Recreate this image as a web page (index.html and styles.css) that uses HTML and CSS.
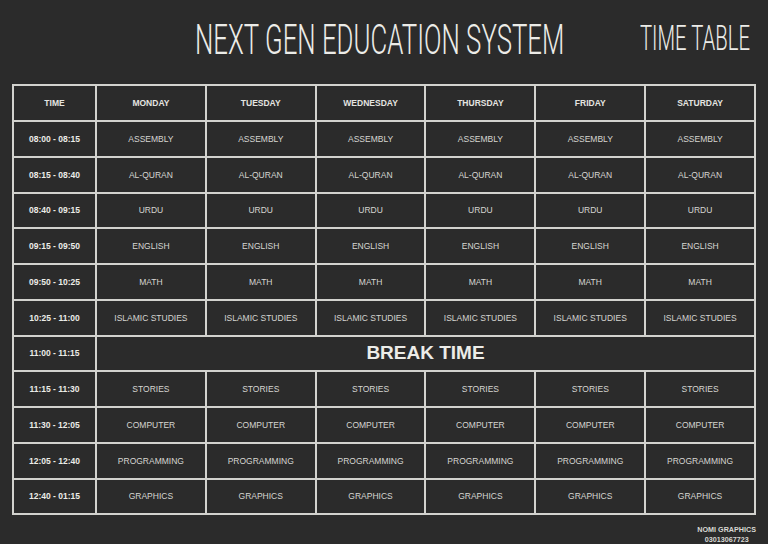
FILE: index.html
```html
<!DOCTYPE html>
<html>
<head>
<meta charset="utf-8">
<link rel="stylesheet" href="styles.css">
</head>
<body>
<header class="top">
  <div class="title-box"><h1 class="title">NEXT GEN EDUCATION SYSTEM</h1></div>
  <div class="sub-box"><h2 class="subtitle">TIME TABLE</h2></div>
</header>
<table class="tt">
  <colgroup>
    <col class="c-time"><col><col><col><col><col><col>
  </colgroup>
  <thead>
    <tr><th>TIME</th><th>MONDAY</th><th>TUESDAY</th><th>WEDNESDAY</th><th>THURSDAY</th><th>FRIDAY</th><th>SATURDAY</th></tr>
  </thead>
  <tbody>
    <tr><th>08:00 - 08:15</th><td>ASSEMBLY</td><td>ASSEMBLY</td><td>ASSEMBLY</td><td>ASSEMBLY</td><td>ASSEMBLY</td><td>ASSEMBLY</td></tr>
    <tr><th>08:15 - 08:40</th><td>AL-QURAN</td><td>AL-QURAN</td><td>AL-QURAN</td><td>AL-QURAN</td><td>AL-QURAN</td><td>AL-QURAN</td></tr>
    <tr><th>08:40 - 09:15</th><td>URDU</td><td>URDU</td><td>URDU</td><td>URDU</td><td>URDU</td><td>URDU</td></tr>
    <tr><th>09:15 - 09:50</th><td>ENGLISH</td><td>ENGLISH</td><td>ENGLISH</td><td>ENGLISH</td><td>ENGLISH</td><td>ENGLISH</td></tr>
    <tr><th>09:50 - 10:25</th><td>MATH</td><td>MATH</td><td>MATH</td><td>MATH</td><td>MATH</td><td>MATH</td></tr>
    <tr><th>10:25 - 11:00</th><td>ISLAMIC STUDIES</td><td>ISLAMIC STUDIES</td><td>ISLAMIC STUDIES</td><td>ISLAMIC STUDIES</td><td>ISLAMIC STUDIES</td><td>ISLAMIC STUDIES</td></tr>
    <tr><th>11:00 - 11:15</th><td colspan="6" class="break">BREAK TIME</td></tr>
    <tr><th>11:15 - 11:30</th><td>STORIES</td><td>STORIES</td><td>STORIES</td><td>STORIES</td><td>STORIES</td><td>STORIES</td></tr>
    <tr><th>11:30 - 12:05</th><td>COMPUTER</td><td>COMPUTER</td><td>COMPUTER</td><td>COMPUTER</td><td>COMPUTER</td><td>COMPUTER</td></tr>
    <tr><th>12:05 - 12:40</th><td>PROGRAMMING</td><td>PROGRAMMING</td><td>PROGRAMMING</td><td>PROGRAMMING</td><td>PROGRAMMING</td><td>PROGRAMMING</td></tr>
    <tr><th>12:40 - 01:15</th><td>GRAPHICS</td><td>GRAPHICS</td><td>GRAPHICS</td><td>GRAPHICS</td><td>GRAPHICS</td><td>GRAPHICS</td></tr>
  </tbody>
</table>
<footer class="credit">
  <div class="credit-inner">
    <div>NOMI GRAPHICS</div>
    <div>03013067723</div>
  </div>
</footer>
</body>
</html>
```
FILE: styles.css
```css
html, body {
  margin: 0;
  padding: 0;
  background: #2b2b2b;
}
body {
  width: 768px;
  height: 544px;
  overflow: hidden;
  font-family: "Liberation Sans", Arial, sans-serif;
  color: #e6e6e2;
}
.top {
  display: flex;
  height: 84px;
  overflow: hidden;
}
.title-box {
  flex: 0 0 640px;
  width: 640px;
  padding-left: 195px;
  padding-top: 14px;
  box-sizing: border-box;
  overflow: hidden;
}
.title {
  margin: 0;
  display: inline-block;
  white-space: nowrap;
  font-family: Roboto, sans-serif;
  font-weight: 300;
  font-size: 43px;
  line-height: 50px;
  color: #ecece8;
  transform: scaleX(0.6);
  transform-origin: left center;
}
.sub-box {
  flex: 0 0 128px;
  padding-top: 18px;
  overflow: hidden;
}
.subtitle {
  margin: 0;
  display: inline-block;
  white-space: nowrap;
  font-family: Roboto, sans-serif;
  font-weight: 300;
  font-size: 35px;
  line-height: 42px;
  color: #ecece8;
  transform: scaleX(0.58);
  transform-origin: left center;
}
.tt {
  margin-left: 12px;
  width: 744px;
  border-collapse: collapse;
  table-layout: fixed;
}
.c-time {
  width: 83px;
}
.tt th, .tt td {
  border: 2px solid #d2d2ce;
  text-align: center;
  vertical-align: middle;
  padding: 0;
  height: 33.75px;
}
.tt thead th {
  height: 34px;
  font-size: 8.5px;
  font-weight: 700;
  color: #e4e4e0;
}
.tt tbody th {
  font-size: 8.5px;
  font-weight: 700;
  color: #ececE8;
}
.tt td {
  font-size: 8.5px;
  font-weight: 400;
  color: #d6d6d2;
}
.tt td.break {
  font-size: 19px;
  font-weight: 700;
  color: #ececE8;
}
.credit {
  margin-top: 10px;
  width: 756px;
  display: flex;
  justify-content: flex-end;
}
.credit-inner {
  font-size: 7.2px;
  font-weight: 700;
  line-height: 10px;
  color: #d8d8d4;
  text-align: center;
}
```
